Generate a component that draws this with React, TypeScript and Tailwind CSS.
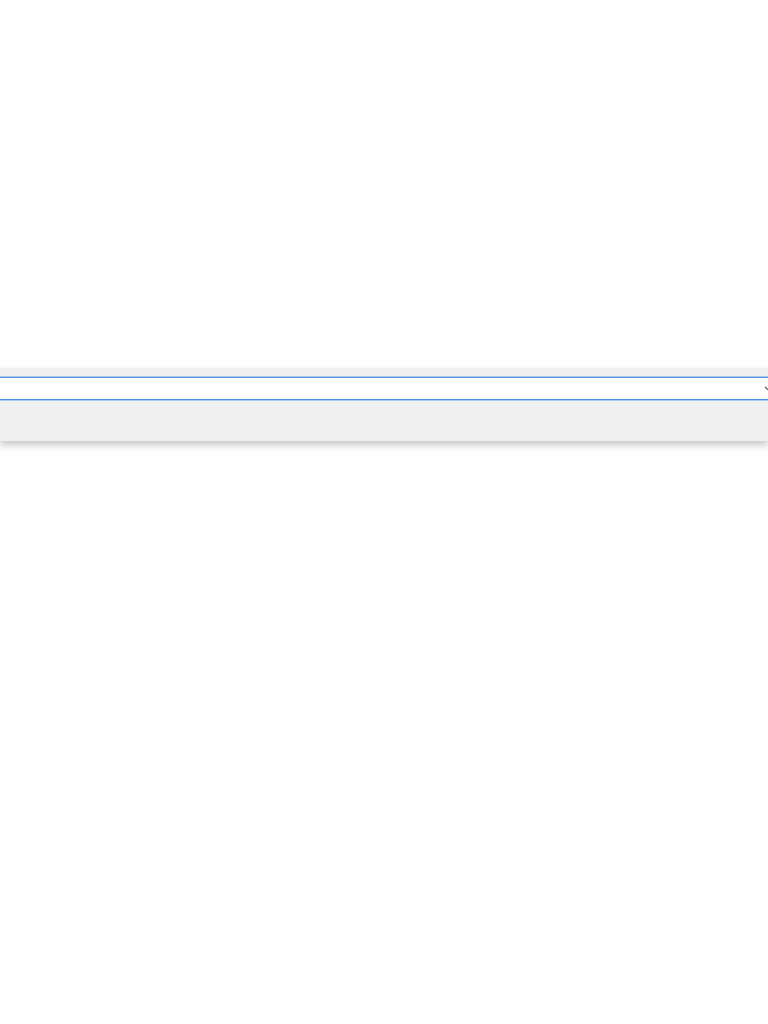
export default function App() {
  return (
    <div className="min-h-[1024px] w-full overflow-hidden bg-[#fefefe] font-['Liberation_Sans',sans-serif]">
      <div className="h-[368px]" />
      <div className="relative h-[73px] bg-[#f0f0f0] pt-[9px] shadow-[0_4px_7px_rgba(0,0,0,0.22)]">
        <div className="-mx-[2px] flex h-[23px] items-center border-t border-b border-t-[#4a90dc] border-b-[#4a90dc] bg-white shadow-[0_0_0_1px_#a9cdf0]">
          <span className="flex-1" />
          <svg width="12" height="8" viewBox="0 0 12 8" className="shrink-0 translate-x-[6px]">
            <path d="M1 2 L6 6.5 L11 2" fill="none" stroke="#555" strokeWidth="1.2" />
          </svg>
        </div>
      </div>
    </div>
  );
}
